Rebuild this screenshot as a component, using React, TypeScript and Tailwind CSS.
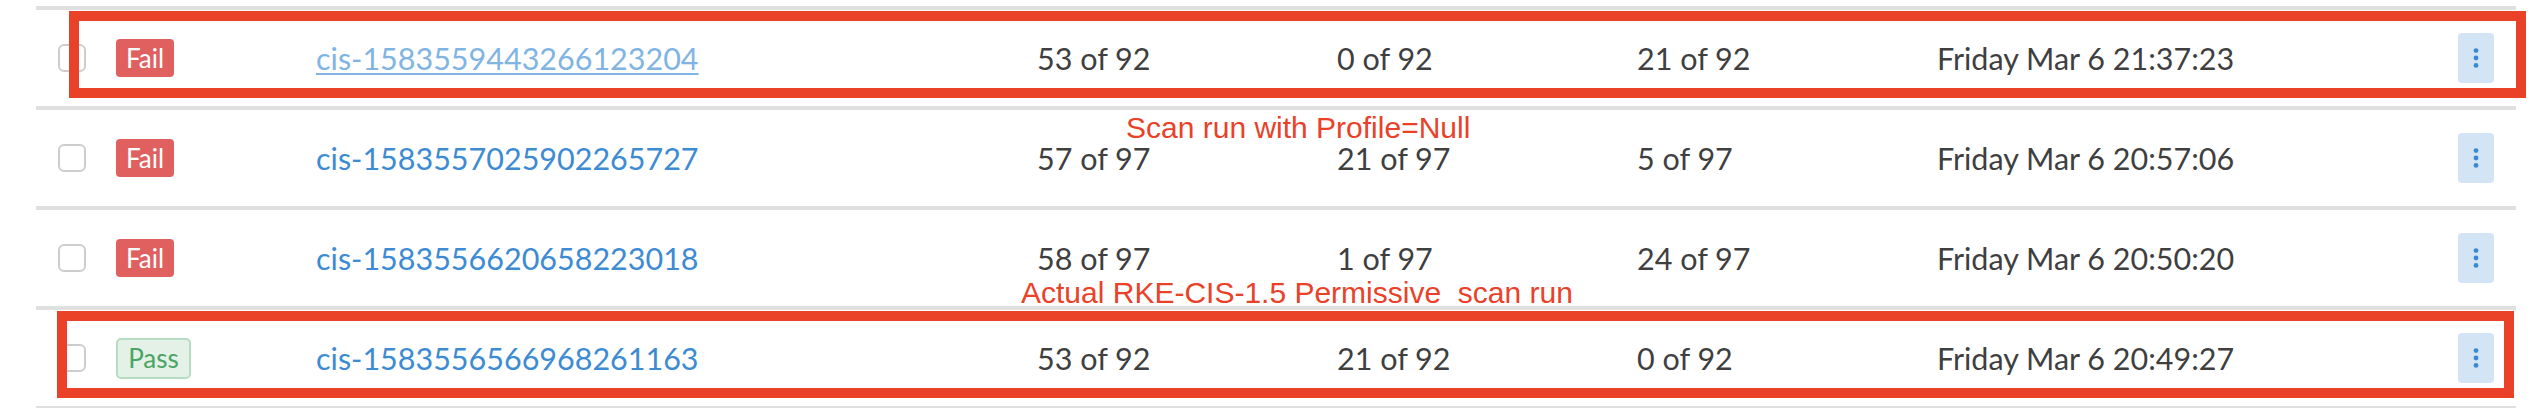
import React from "react";

type Row = {
  status: "Fail" | "Pass";
  name: string;
  pass: string;
  skip: string;
  fail: string;
  date: string;
  visited?: boolean;
};

const rows: Row[] = [
  { status: "Fail", name: "cis-1583559443266123204", pass: "53 of 92", skip: "0 of 92", fail: "21 of 92", date: "Friday Mar 6 21:37:23", visited: true },
  { status: "Fail", name: "cis-1583557025902265727", pass: "57 of 97", skip: "21 of 97", fail: "5 of 97", date: "Friday Mar 6 20:57:06" },
  { status: "Fail", name: "cis-1583556620658223018", pass: "58 of 97", skip: "1 of 97", fail: "24 of 97", date: "Friday Mar 6 20:50:20" },
  { status: "Pass", name: "cis-1583556566968261163", pass: "53 of 92", skip: "21 of 92", fail: "0 of 92", date: "Friday Mar 6 20:49:27" },
];

function Dots() {
  return (
    <svg width="8" height="22" viewBox="0 0 8 22" aria-hidden="true">
      <circle cx="4" cy="3.6" r="2.4" fill="#3d88cf" />
      <circle cx="4" cy="11" r="2.4" fill="#3d88cf" />
      <circle cx="4" cy="18.4" r="2.4" fill="#3d88cf" />
    </svg>
  );
}

function TableRow({ r }: { r: Row }) {
  return (
    <div className="grid h-[100px] grid-cols-[58px_200px_721px_300px_300px_300px_1fr_36px] items-center border-t-4 border-[#e0e0e0] pl-[22px] pr-[22px] text-[30.5px] text-[#3f3f3f]">
      <div className="h-[28px] w-[28px] rounded-[6px] border-2 border-[#cdcdcd] bg-white" />
      <div>
        {r.status === "Fail" ? (
          <span className="inline-flex h-[38px] w-[58px] items-center justify-center rounded-[4px] bg-[#e06060] text-[26px] leading-none text-white">
            Fail
          </span>
        ) : (
          <span className="inline-flex h-[41px] w-[75px] items-center justify-center rounded-[5px] border-2 border-[#b6dcc1] bg-[#e3f1e6] text-[26px] leading-none text-[#4aa464]">
            Pass
          </span>
        )}
      </div>
      <div>
        <a
          className={
            r.visited
              ? "text-[#7fb4e3] underline decoration-2 underline-offset-[3px]"
              : "text-[#3d8bd3]"
          }
        >
          {r.name}
        </a>
      </div>
      <div>{r.pass}</div>
      <div>{r.skip}</div>
      <div>{r.fail}</div>
      <div>{r.date}</div>
      <div className="flex h-[50px] w-[36px] items-center justify-center rounded-[4px] bg-[#d3e4f4]">
        <Dots />
      </div>
    </div>
  );
}

export default function App() {
  return (
    <div className="relative h-[408px] w-[2542px] overflow-hidden bg-white" style={{ fontFamily: "Lato, 'Open Sans', sans-serif" }}>
      <div className="ml-[36px] mt-[6px] w-[2480px] border-b-4 border-[#e0e0e0] leading-none">
        {rows.map((r) => (
          <TableRow key={r.name} r={r} />
        ))}
      </div>

      {/* annotations */}
      <div className="pointer-events-none absolute left-[69px] top-[11px] h-[87px] w-[2457px] border-[10px] border-[#ea4129]" />
      <div className="pointer-events-none absolute left-[57px] top-[311px] h-[87px] w-[2457px] border-[10px] border-[#ea4129]" />
      <div
        className="absolute left-[1126px] top-[113px] whitespace-pre text-[30px] leading-none text-[#ea4129]"
        style={{ fontFamily: "'Liberation Sans', Arial, sans-serif" }}
      >
        Scan run with Profile=Null
      </div>
      <div
        className="absolute left-[1021px] top-[278px] whitespace-pre text-[30px] leading-none text-[#ea4129]"
        style={{ fontFamily: "'Liberation Sans', Arial, sans-serif" }}
      >
        {"Actual RKE-CIS-1.5 Permissive  scan run"}
      </div>
    </div>
  );
}
